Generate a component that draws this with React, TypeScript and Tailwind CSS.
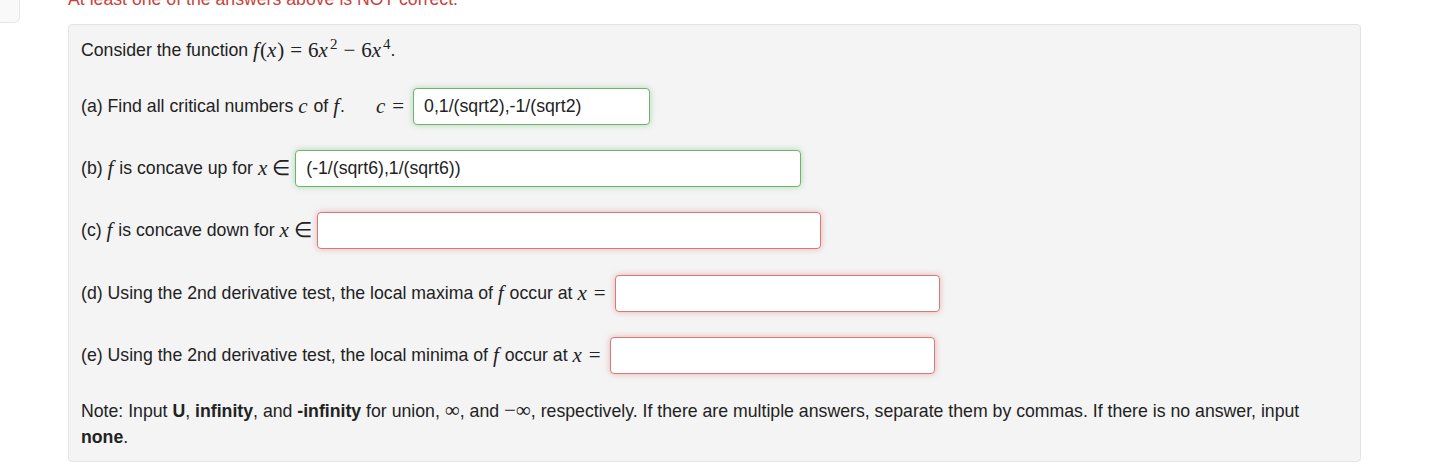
import type { ReactNode } from "react";

const mathFont = "[font-family:'Liberation_Serif','Times_New_Roman',serif]";

function M({ children }: { children: ReactNode }) {
  return <span className={`${mathFont} text-[21px] leading-none`}>{children}</span>;
}

function V({ children }: { children: ReactNode }) {
  return <i className="mr-[1px] italic">{children}</i>;
}

function Rel({ children, tight }: { children: ReactNode; tight?: boolean }) {
  return <span className={`${tight ? "ml-[4px] mr-[2px]" : "mx-[6px]"} not-italic`}>{children}</span>;
}

function Sup({ children }: { children: ReactNode }) {
  return <sup className="ml-[1px] text-[15px]">{children}</sup>;
}

function AnswerBox({ value, ok, width }: { value?: string; ok: boolean; width: string }) {
  return (
    <div
      className={`ml-[3px] flex h-[37px] items-center rounded-[4px] border bg-white px-[10px] text-[17.7px] text-[#222] ${width} ${
        ok
          ? "border-[#6fb26f] shadow-[0_0_6px_rgba(92,184,92,0.45)]"
          : "border-[#d47a7a] shadow-[0_0_6px_rgba(217,83,79,0.4)]"
      }`}
    >
      {value}
    </div>
  );
}

export default function App() {
  return (
    <div className="flex h-[467px] w-[1449px] overflow-hidden bg-white font-['Liberation_Sans',Arial,sans-serif] text-[17.7px] text-[#222]">
      <div className="w-[68px] shrink-0">
        <div className="h-[23px] w-[20px] rounded-br-[6px] border-r border-b border-[#e6e6e6] bg-[#f9f9f9]" />
      </div>

      <div className="flex w-[1293px] flex-col">
        <div className="-mt-[11px] h-[20px] leading-[20px] text-[#c8433a]">
          At least one of the answers above is NOT correct.
        </div>

        <div className="mt-[15px] flex h-[438px] flex-col rounded-[4px] border border-[#e3e3e3] bg-[#f4f4f4] px-[12px] pt-[12px]">
          <div className="flex h-[26px] items-center">
            <span>Consider the function&nbsp;</span>
            <M>
              <V>f</V>(<V>x</V>)<Rel>=</Rel>6<V>x</V>
              <Sup>2</Sup>
              <Rel>−</Rel>6<V>x</V>
              <Sup>4</Sup>
            </M>
            <span>.</span>
          </div>

          <div className="mt-[25px] flex h-[37px] items-center">
            <span>(a) Find all critical numbers&nbsp;</span>
            <M>
              <V>c</V>
            </M>
            <span>&nbsp;of&nbsp;</span>
            <M>
              <V>f</V>
            </M>
            <span>.</span>
            <span className="inline-block w-[31px]" />
            <M>
              <V>c</V>
              <Rel>=</Rel>
            </M>
            <AnswerBox value="0,1/(sqrt2),-1/(sqrt2)" ok width="w-[237px]" />
          </div>

          <div className="mt-[25px] flex h-[37px] items-center">
            <span>(b)&nbsp;</span>
            <M>
              <V>f</V>
            </M>
            <span>&nbsp;is concave up for&nbsp;</span>
            <M>
              <V>x</V>
              <Rel tight>∈</Rel>
            </M>
            <AnswerBox value="(-1/(sqrt6),1/(sqrt6))" ok width="w-[506px]" />
          </div>

          <div className="mt-[25px] flex h-[37px] items-center">
            <span>(c)&nbsp;</span>
            <M>
              <V>f</V>
            </M>
            <span>&nbsp;is concave down for&nbsp;</span>
            <M>
              <V>x</V>
              <Rel tight>∈</Rel>
            </M>
            <AnswerBox ok={false} width="w-[504px]" />
          </div>

          <div className="mt-[26px] flex h-[37px] items-center">
            <span>(d) Using the 2nd derivative test, the local maxima of&nbsp;</span>
            <M>
              <V>f</V>
            </M>
            <span>&nbsp;occur at&nbsp;</span>
            <M>
              <V>x</V>
              <Rel>=</Rel>
            </M>
            <AnswerBox ok={false} width="w-[325px]" />
          </div>

          <div className="mt-[25px] flex h-[37px] items-center">
            <span>(e) Using the 2nd derivative test, the local minima of&nbsp;</span>
            <M>
              <V>f</V>
            </M>
            <span>&nbsp;occur at&nbsp;</span>
            <M>
              <V>x</V>
              <Rel>=</Rel>
            </M>
            <AnswerBox ok={false} width="w-[325px]" />
          </div>

          <p className="mt-[24px] leading-[26px]">
            Note: Input <b>U</b>, <b>infinity</b>, and <b>-infinity</b> for union, <M>∞</M>, and{" "}
            <M>
              −∞
            </M>
            , respectively. If there are multiple answers, separate them by commas. If there is no answer, input
            <br />
            <b>none</b>.
          </p>
        </div>
      </div>
    </div>
  );
}
